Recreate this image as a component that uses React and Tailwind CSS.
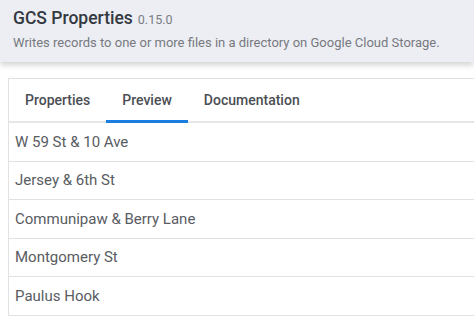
const rows = [
  "W 59 St & 10 Ave",
  "Jersey & 6th St",
  "Communipaw & Berry Lane",
  "Montgomery St",
  "Paulus Hook",
];

const tabs = ["Properties", "Preview", "Documentation"];

export default function App() {
  return (
    <div
      className="w-[474px] h-[319px] overflow-hidden bg-white"
      style={{ fontFamily: "Roboto, 'Liberation Sans', sans-serif" }}
    >
      {/* header */}
      <div className="h-[62px] bg-[#eceef3] px-[13px] pt-[5px] shadow-[0_3px_6px_rgba(0,0,0,0.18)] relative z-10">
        <div className="flex items-baseline gap-[5px]">
          <span className="text-[17.5px] font-medium text-[#333841]">GCS Properties</span>
          <span className="text-[12.5px] text-[#7a7d83]">0.15.0</span>
        </div>
        <div className="mt-[2px] text-[13px] text-[#77797f]">
          Writes records to one or more files in a directory on Google Cloud Storage.
        </div>
      </div>

      {/* panel */}
      <div className="ml-[8px] mt-[16px] border-l border-t border-[#e2e2e2]">
        <div className="flex h-[44px] border-b-2 border-[#e6e6e6]">
          {tabs.map((t) => (
            <div
              key={t}
              className="relative px-4 flex items-center text-[14px] font-medium text-[#4b4e54]"
            >
              {t}
              {t === "Preview" && (
                <div className="absolute left-0 right-0 -bottom-[2px] h-[3px] bg-[#1a7de0]" />
              )}
            </div>
          ))}
        </div>
        {rows.map((r) => (
          <div
            key={r}
            className="h-[38.5px] flex items-center pl-[6px] border-b border-[#e2e2e2] text-[15px] text-[#595c62]"
          >
            {r}
          </div>
        ))}
      </div>
    </div>
  );
}
